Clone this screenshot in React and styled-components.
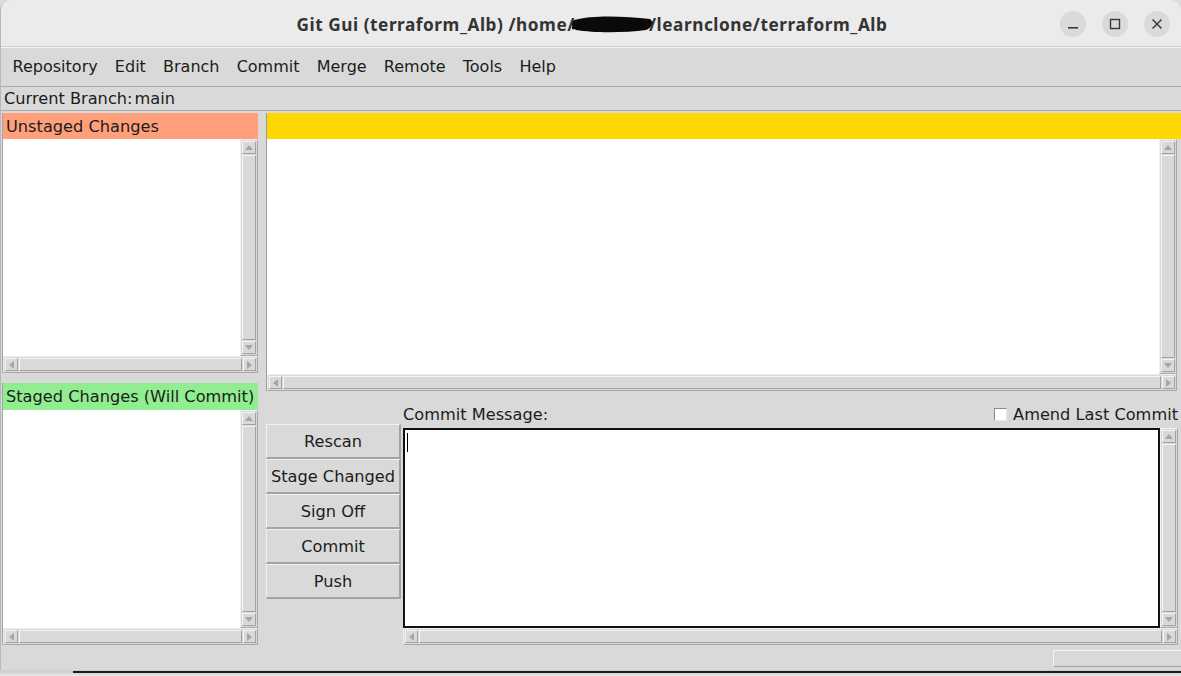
import React from "react";
import styled, { createGlobalStyle } from "styled-components";

const Global = createGlobalStyle`
  html, body { margin: 0; padding: 0; background: #d6d6d6; }
  body { font-family: "DejaVu Sans", "Liberation Sans", sans-serif; overflow: hidden; }
  * { box-sizing: border-box; }
`;

const TK = "#d9d9d9";
const FONT = `"DejaVu Sans", "Liberation Sans", sans-serif`;
const FS = "16.2px";

const Screen = styled.div`
  width: 1181px;
  height: 676px;
  display: flex;
  flex-direction: column;
  background: #dcdcdc;
`;

const Window = styled.div`
  width: 1181px;
  height: 670px;
  display: flex;
  flex-direction: column;
  background: ${TK};
  border-left: 1px solid #b8b8b8;
  border-radius: 10px 10px 0 0;
  overflow: hidden;
`;

const TitleBar = styled.div`
  height: 47px;
  flex: none;
  display: flex;
  align-items: center;
  justify-content: center;
  position: relative;
  background: #ebebeb;
  border-bottom: 1px solid #cfcfcf;
`;

const Title = styled.div`
  display: flex;
  align-items: center;
  font-family: "Noto Sans", "DejaVu Sans", sans-serif;
  font-weight: 700;
  font-size: 17.2px;
  letter-spacing: 0.55px;
  color: #333;
  white-space: nowrap;
  margin-left: 2px;
  margin-top: 2px;
`;

const WinButtons = styled.div`
  position: absolute;
  right: 11px;
  top: 11px;
  display: flex;
  gap: 16px;
`;

const WinButton = styled.div`
  width: 26px;
  height: 26px;
  border-radius: 50%;
  background: #dadada;
  display: flex;
  align-items: center;
  justify-content: center;
`;

const MenuBar = styled.div`
  height: 40px;
  flex: none;
  display: flex;
  align-items: center;
  padding-left: 3px;
  padding-bottom: 1px;
  border-top: 1px solid #f4f4f4;
  border-bottom: 1px solid #a9a9a9;
  font-family: ${FONT};
  font-size: 16px;
  color: #1c1c1c;
`;

const MenuItem = styled.span`
  padding: 0 8.6px;
`;

const BranchRow = styled.div`
  height: 24px;
  flex: none;
  display: flex;
  align-items: center;
  gap: 2px;
  padding-left: 3px;
  font-family: ${FONT};
  font-size: ${FS};
  color: #1c1c1c;
  border-bottom: 1px solid #a9a9a9;
`;

const Main = styled.div`
  flex: 1;
  display: grid;
  grid-template-columns: 258px 6px 1fr;
  padding-left: 1px;
  min-height: 0;
`;

const LeftPane = styled.div`
  display: flex;
  flex-direction: column;
  padding: 2px 0 2px 0;
  min-height: 0;
`;

const Section = styled.div`
  display: flex;
  flex-direction: column;
  flex: ${(p) => p.$flex};
  min-height: 0;
  border-left: 1px solid #a4a4a4;
  padding-right: 2px;
`;

const Header = styled.div`
  height: ${(p) => p.$h}px;
  flex: none;
  background: ${(p) => p.$bg};
  font-family: ${FONT};
  font-size: ${FS};
  color: #1c1c1c;
  display: flex;
  align-items: center;
  padding-left: 3px;
  white-space: nowrap;
  overflow: hidden;
  ${(p) => p.$edge && "border-left: 1px solid #9c9c9c;"}
`;

const ListRow = styled.div`
  flex: 1;
  display: flex;
  min-height: 0;
`;

const WhiteArea = styled.div`
  flex: 1;
  background: #fff;
  position: relative;
  ${(p) => p.$frame && `border: 2px solid #111;`}
`;

const Cursor = styled.div`
  position: absolute;
  left: 2px;
  top: 3px;
  width: 1px;
  height: 19px;
  background: #000;
`;

const HSash = styled.div`
  height: 10px;
  flex: none;
`;

const VSash = styled.div``;

const RightPane = styled.div`
  display: flex;
  flex-direction: column;
  padding-top: 2px;
  min-height: 0;
`;

const DiffFrame = styled.div`
  height: 252px;
  flex: none;
  display: flex;
  flex-direction: column;
  border-left: 1px solid #9c9c9c;
  padding-right: 4px;
`;

const CommitArea = styled.div`
  flex: 1;
  display: grid;
  grid-template-columns: 135px 1fr;
  gap: 2px;
  padding: 2px 3px 2px 0;
  min-height: 0;
`;

const ButtonCol = styled.div`
  display: flex;
  flex-direction: column;
  padding-top: 31px;
`;

const TkButton = styled.div`
  height: 35px;
  flex: none;
  display: flex;
  align-items: center;
  justify-content: center;
  font-family: ${FONT};
  font-size: ${FS};
  color: #1c1c1c;
  background: ${TK};
  border-top: 1px solid #f2f2f2;
  border-left: 1px solid #f2f2f2;
  border-bottom: 2px solid #a3a3a3;
  border-right: 2px solid #a3a3a3;
  white-space: nowrap;
`;

const Buffer = styled.div`
  display: flex;
  flex-direction: column;
  min-height: 0;
`;

const LabelRow = styled.div`
  height: 35px;
  flex: none;
  display: flex;
  align-items: flex-end;
  justify-content: space-between;
  font-family: ${FONT};
  font-size: ${FS};
  color: #1c1c1c;
  padding-bottom: 4px;
`;

const Amend = styled.label`
  display: flex;
  align-items: center;
  gap: 6px;
`;

const CheckBox = styled.span`
  width: 13px;
  height: 13px;
  background: #fff;
  border: 1px solid #8a8a8a;
  border-right-color: #e8e8e8;
  border-bottom-color: #e8e8e8;
`;

const MsgRow = styled.div`
  flex: 1;
  display: flex;
  min-height: 0;
`;

const StatusBar = styled.div`
  height: 23px;
  flex: none;
  display: flex;
  justify-content: flex-end;
  align-items: center;
`;

const StatusField = styled.div`
  width: 128px;
  height: 17px;
  border-top: 1px solid #f4f4f4;
  border-left: 1px solid #f4f4f4;
  border-bottom: 1px solid #a0a0a0;
  background: ${TK};
`;

const Desktop = styled.div`
  flex: 1;
  display: flex;
  align-items: flex-start;
  padding-left: 73px;
  padding-top: 1px;
  background: linear-gradient(#c9c9c9, #e6e6e6);
`;

const DesktopLine = styled.div`
  flex: 1;
  height: 2px;
  background: #1d1a20;
`;

/* Scrollbar */
const SbTrack = styled.div`
  flex: none;
  display: flex;
  flex-direction: ${(p) => (p.$v ? "column" : "row")};
  ${(p) => (p.$v ? "width: 18px;" : "height: 17px;")}
  background: ${TK};
  border: 1px solid #f0f0f0;
  border-right-color: #a8a8a8;
  border-bottom-color: #a8a8a8;
  padding: 1px;
  gap: 1px;
`;

const SbArrow = styled.div`
  flex: none;
  ${(p) => (p.$v ? "height: 13px;" : "width: 13px;")}
  display: flex;
  align-items: center;
  justify-content: center;
  background: ${TK};
  border: 1px solid #f4f4f4;
  border-right-color: #a2a2a2;
  border-bottom-color: #a2a2a2;
`;

const SbSlider = styled.div`
  flex: 1;
  background: ${TK};
  border: 1px solid #f4f4f4;
  border-right-color: #a2a2a2;
  border-bottom-color: #a2a2a2;
`;

const Tri = ({ dir }) => {
  const pts = {
    up: "1,7 5,2 9,7",
    down: "1,2 5,7 9,2",
    left: "7,1 2,5 7,9",
    right: "2,1 7,5 2,9",
  }[dir];
  return (
    <svg width="10" height="10" viewBox="0 0 10 10">
      <polygon points={pts} fill="#a6a6a6" />
    </svg>
  );
};

const Scrollbar = ({ vertical }) => (
  <SbTrack $v={vertical}>
    <SbArrow $v={vertical}>
      <Tri dir={vertical ? "up" : "left"} />
    </SbArrow>
    <SbSlider />
    <SbArrow $v={vertical}>
      <Tri dir={vertical ? "down" : "right"} />
    </SbArrow>
  </SbTrack>
);

const Redacted = () => (
  <svg width="84" height="20" viewBox="0 0 84 20" style={{ margin: "0 -5px" }}>
    <path
      d="M4 6 C22 1 54 2 80 5 C84 8 82 14 76 16 C54 19 24 19 6 16 C1 13 1 9 4 6 Z"
      fill="#0a0a0a"
    />
    <path d="M2 14 C27 10 59 10 83 9" stroke="#0a0a0a" strokeWidth="3" fill="none" />
  </svg>
);

const ListSection = ({ label, bg, h, flex }) => (
  <Section $flex={flex}>
    <Header $bg={bg} $h={h}>{label}</Header>
    <ListRow>
      <WhiteArea />
      <Scrollbar vertical />
    </ListRow>
    <Scrollbar />
  </Section>
);

const menus = ["Repository", "Edit", "Branch", "Commit", "Merge", "Remote", "Tools", "Help"];
const buttons = ["Rescan", "Stage Changed", "Sign Off", "Commit", "Push"];

export default function App() {
  return (
    <>
      <Global />
      <Screen>
        <Window>
          <TitleBar>
            <Title>
              Git Gui (terraform_Alb) /home/
              <Redacted />
              /learnclone/terraform_Alb
            </Title>
            <WinButtons>
              <WinButton>
                <svg width="12" height="12" viewBox="0 0 12 12">
                  <rect x="1" y="9" width="10" height="1.6" fill="#3a3a3a" />
                </svg>
              </WinButton>
              <WinButton>
                <svg width="12" height="12" viewBox="0 0 12 12">
                  <rect x="1.5" y="1.5" width="9" height="9" fill="none" stroke="#3a3a3a" strokeWidth="1.4" />
                </svg>
              </WinButton>
              <WinButton>
                <svg width="12" height="12" viewBox="0 0 12 12">
                  <path d="M1.5 1.5 L10.5 10.5 M10.5 1.5 L1.5 10.5" stroke="#3a3a3a" strokeWidth="1.5" />
                </svg>
              </WinButton>
            </WinButtons>
          </TitleBar>
          <MenuBar>
            {menus.map((m) => (
              <MenuItem key={m}>{m}</MenuItem>
            ))}
          </MenuBar>
          <BranchRow>
            <span>Current Branch:</span>
            <span>main</span>
          </BranchRow>
          <Main>
            <LeftPane>
              <ListSection label="Unstaged Changes" bg="#ffa07a" h={26} flex="0 0 260px" />
              <HSash />
              <ListSection label="Staged Changes (Will Commit)" bg="#90ee90" h={27} flex="1" />
            </LeftPane>
            <VSash />
            <RightPane>
              <Header $bg="#ffd700" $h={26} $edge />
              <DiffFrame>
                <ListRow>
                  <WhiteArea />
                  <Scrollbar vertical />
                </ListRow>
                <Scrollbar />
              </DiffFrame>
              <CommitArea>
                <ButtonCol>
                  {buttons.map((b) => (
                    <TkButton key={b}>{b}</TkButton>
                  ))}
                </ButtonCol>
                <Buffer>
                  <LabelRow>
                    <span>Commit Message:</span>
                    <Amend>
                      <CheckBox />
                      Amend Last Commit
                    </Amend>
                  </LabelRow>
                  <MsgRow>
                    <WhiteArea $frame>
                      <Cursor />
                    </WhiteArea>
                    <Scrollbar vertical />
                  </MsgRow>
                  <Scrollbar />
                </Buffer>
              </CommitArea>
            </RightPane>
          </Main>
          <StatusBar>
            <StatusField />
          </StatusBar>
        </Window>
        <Desktop>
          <DesktopLine />
        </Desktop>
      </Screen>
    </>
  );
}
